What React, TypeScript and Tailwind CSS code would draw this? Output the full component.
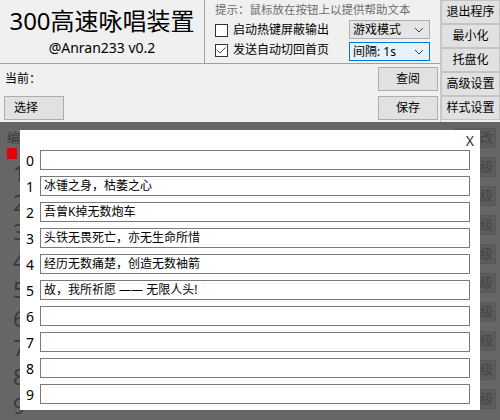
const lines = [
  "冰锺之身，枯萎之心",
  "吾曾K掉无数炮车",
  "头铁无畏死亡，亦无生命所惜",
  "经历无数痛楚，创造无数袖箭",
  "故，我所祈愿 —— 无限人头!",
  "",
  "",
  "",
  "",
];

const sideButtons = ["退出程序", "最小化", "托盘化", "高级设置", "样式设置"];
const dimButtons = ["修改", "升级", "升级", "升级", "升级", "升级", "升级", "升级", "升级", "升级"];

function Chevron() {
  return (
    <svg width="10" height="6" viewBox="0 0 10 6">
      <polyline points="1,1 5,5 9,1" fill="none" stroke="#444" strokeWidth="1" />
    </svg>
  );
}

function Checkbox({ checked, label }: { checked?: boolean; label: string }) {
  return (
    <div className="flex items-center h-[20px] gap-[5px]">
      <div className="w-[13px] h-[13px] border border-[#333] bg-white flex items-center justify-center">
        {checked && (
          <svg width="11" height="11" viewBox="0 0 11 11">
            <polyline points="1.5,5.5 4,8 9.5,2.5" fill="none" stroke="#444" strokeWidth="1" />
          </svg>
        )}
      </div>
      <span>{label}</span>
    </div>
  );
}

function TopBar() {
  return (
    <div className="flex h-[122px] bg-[#f0f0f0]">
      <div className="w-[440px] flex flex-col">
        <div className="flex h-[64px]">
          <div className="w-[205px] border-r border-b border-[#a0a0a0] flex flex-col items-center pt-[4px]">
            <div className="text-[24px] leading-[34px]">300高速咏唱装置</div>
            <div className="text-[14px] leading-[20px]">@Anran233 v0.2</div>
          </div>
          <div className="flex-1 border-b border-[#a0a0a0] pl-[10px] flex flex-col">
            <div className="h-[20px] leading-[20px] text-[11.5px] text-[#6d6d6d]">提示：鼠标放在按钮上以提供帮助文本</div>
            <div className="flex">
              <div className="w-[134px] flex flex-col">
                <Checkbox label="启动热键屏蔽输出" />
                <Checkbox checked label="发送自动切回首页" />
              </div>
              <div className="w-[81px] flex flex-col gap-[3px]">
                <div className="h-[19px] border border-[#adadad] bg-[#e5e5e5] flex items-center justify-between pl-[3px] pr-[5px]">
                  <span>游戏模式</span>
                  <Chevron />
                </div>
                <div className="h-[19px] border border-[#0078d7] bg-[#e5f1fb] flex items-center justify-between pl-[3px] pr-[5px]">
                  <span>间隔: 1s</span>
                  <Chevron />
                </div>
              </div>
            </div>
          </div>
        </div>
        <div className="flex items-center justify-between h-[29px] pl-[5px] pr-[2px]">
          <span>当前：</span>
          <div className="w-[60px] h-[24px] border border-[#adadad] bg-[#e1e1e1] flex items-center justify-center">查阅</div>
        </div>
        <div className="flex items-center justify-between h-[29px] pl-[4px] pr-[2px]">
          <div className="w-[60px] h-[24px] border border-[#adadad] bg-[#e1e1e1] flex items-center pl-[9px]">选择</div>
          <div className="w-[60px] h-[24px] border border-[#adadad] bg-[#e1e1e1] flex items-center justify-center">保存</div>
        </div>
      </div>
      <div className="w-[60px] flex flex-col border-l border-[#c8c8c8]">
        {sideButtons.map((t) => (
          <div key={t} className="h-[24px] border border-[#c4c4c4] bg-[#e1e1e1] flex items-center justify-center">
            {t}
          </div>
        ))}
      </div>
    </div>
  );
}

function DimPage() {
  return (
    <div className="flex h-[298px] justify-between bg-[#666666]">
      <div className="flex flex-col pl-[7px]">
        <div className="h-[33px] pt-[6px] text-[13px] text-[#3a3a3a]">编号</div>
        <div className="w-[10px] h-[20px] bg-red-600"></div>
        {[1, 2, 3, 4, 5, 6, 7, 8, 9].map((n) => (
          <div key={n} className="h-[29px] leading-[29px] pl-[6px] text-[22px] text-[#3a3a3a]">
            {n}
          </div>
        ))}
      </div>
      <div className="flex flex-col gap-[9px] pt-[6px] pr-[4px]">
        {dimButtons.map((t, i) => (
          <div key={i} className="w-[42px] h-[20px] bg-[#5c5c5c] border border-[#575757] flex items-center justify-end pr-[2px] text-[13px] text-[#444444]">
            {t}
          </div>
        ))}
      </div>
    </div>
  );
}

export default function App() {
  return (
    <div className="relative w-[500px] h-[420px] overflow-hidden bg-[#666666] text-[12px] text-black font-['Noto_Sans','Noto_Sans_CJK_SC',sans-serif]">
      <TopBar />
      <DimPage />

      <div className="absolute left-[20px] top-[130px] w-[460px] h-[280px] bg-white flex flex-col">
        <div className="h-[20px] flex items-center justify-end pr-[6px] text-[14px] text-[#333]">X</div>
        {["", ...lines].map((text, i) => (
          <div key={i} className="flex items-center h-[20px] mb-[6px]">
            <div className="w-[20px] pl-[6px] text-[14px]">{i}</div>
            <div className="w-[430px] h-[20px] border border-[#7a7a7a] flex items-center pl-[3px]">{text}</div>
          </div>
        ))}
      </div>
    </div>
  );
}
